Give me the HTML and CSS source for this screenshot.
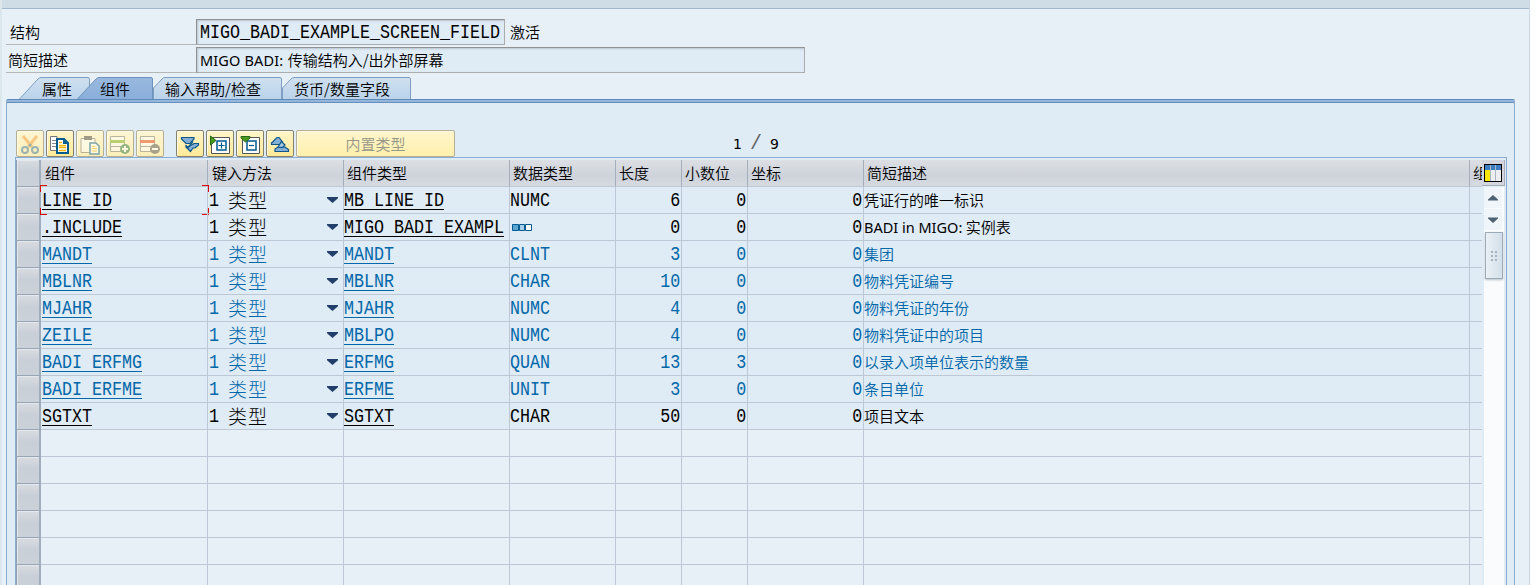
FILE: index.html
```html
<!DOCTYPE html>
<html lang="zh-CN">
<head>
  <meta charset="UTF-8">
  <title>MIGO_BADI_EXAMPLE_SCREEN_FIELD</title>
  <link rel="stylesheet" href="styles.css">
</head>
<body>
  <div class="window">
    <div class="top-bar"></div>

    <div class="form">
      <div class="form-row">
        <label class="form-label">结构</label>
        <div class="field field-name"><span class="mono">MIGO_BADI_EXAMPLE_SCREEN_FIELD</span></div>
        <span class="status">激活</span>
      </div>
      <div class="form-row">
        <label class="form-label second">简短描述</label>
        <div class="field field-desc"><span class="latin">MIGO BADI:</span>&nbsp;传输结构入/出外部屏幕</div>
      </div>
    </div>

    <div class="tabs">
      <svg class="tab-shapes" width="420" height="24" viewBox="0 0 420 24">
        <defs>
          <linearGradient id="tab" x1="0" y1="0" x2="0" y2="1">
            <stop offset="0" stop-color="#cfe0ef"/>
            <stop offset="1" stop-color="#b9d2ea"/>
          </linearGradient>
          <linearGradient id="tabActive" x1="0" y1="0" x2="0" y2="1">
            <stop offset="0" stop-color="#98b8de"/>
            <stop offset="1" stop-color="#8aaedb"/>
          </linearGradient>
        </defs>
        <g stroke="#7f9fc2">
          <path fill="url(#tab)" d="M18.5 23 L38 2 Q39.500 .5 41 .5 H88 Q89.500 .5 89.500 2 V23"/>
          <path fill="url(#tab)" d="M282.500 23 V11 L291 2 Q292.500 .5 294 .5 H409 Q410.500 .5 410.500 2 V23"/>
          <path fill="url(#tab)" d="M153.500 23 V11 L162 2 Q163.500 .5 165 .5 H280 Q281.500 .5 281.500 2 V23"/>
          <path fill="url(#tabActive)" stroke="#6d92bd" d="M76.500 23 L96 2 Q97.500 .5 99 .5 H151 Q152.500 .5 152.500 2 V23"/>
        </g>
      </svg>
      <span class="tab tab-attr">属性</span>
      <span class="tab tab-comp">组件</span>
      <span class="tab tab-help">输入帮助/检查</span>
      <span class="tab tab-curr">货币/数量字段</span>
    </div>

    <div class="panel">
      <div class="toolbar">
        <button class="btn disabled">
          <svg width="20" height="20" viewBox="0 0 20 20"><path d="M3 1 L12 12 M17 1 L8 12" stroke="#f0a040" stroke-width="3"/><g fill="none" stroke="#3a78a8" stroke-width="2"><circle cx="5" cy="15" r="3"/><circle cx="15" cy="15" r="3"/></g><circle cx="10" cy="10" r="1.500" fill="#3a78a8"/></svg>
        </button>
        <button class="btn">
          <svg width="20" height="20" viewBox="0 0 20 20"><path d="M.5 1.500H7V15.500H.5Z" fill="#fff" stroke="#777"/><path d="M2 5.500H6M2 8.500H6M2 11.500H6" stroke="#888"/><path d="M7 4 H14 L18 8 V18 H7Z" fill="#fff" stroke="#005b8e" stroke-width="2"/><path d="M13 4V9H18Z" fill="#005b8e"/><path d="M9 7.500H12M9 10.500H16M9 12.500H16M9 15.500H16" stroke="#f3b400" stroke-width="1.500"/></svg>
        </button>
        <button class="btn disabled">
          <svg width="20" height="20" viewBox="0 0 20 20"><path d="M1 3.500H15V17.500H1Z" fill="#fff" stroke="#777"/><path d="M4 1H12V5H4Z" fill="#444"/><path d="M10 8H16L19 11V19H10Z" fill="#fff" stroke="#005b8e" stroke-width="1.500"/><path d="M12 11.500H15M12 13.500H17M12 16H17" stroke="#f3b400"/></svg>
        </button>
        <button class="btn disabled">
          <svg width="20" height="20" viewBox="0 0 20 20"><path d="M.5 1.500H14.500V16.500H.5Z" fill="#fff" stroke="#777"/><path d="M0 6.500H15" stroke="#7aab20" stroke-width="3"/><path d="M0 11.500H15" stroke="#777"/><circle cx="15" cy="14" r="5" fill="#2f7d46"/><path d="M12 14H18M15 11V17" stroke="#fff" stroke-width="2"/></svg>
        </button>
        <button class="btn disabled">
          <svg width="20" height="20" viewBox="0 0 20 20"><path d="M.5 1.500H14.500V16.500H.5Z" fill="#fff" stroke="#777"/><path d="M0 6.500H15" stroke="#e0451a" stroke-width="3"/><path d="M0 11.500H15" stroke="#777"/><circle cx="15" cy="14" r="5" fill="#555"/><path d="M12 14H18" stroke="#fff" stroke-width="2"/></svg>
        </button>
        <button class="btn group">
          <svg width="20" height="20" viewBox="0 0 20 20"><path d="M1.500 2.500H14V4L10 8.500H6L1.500 4Z" fill="#83afd7" stroke="#0d5687" stroke-width="1.200"/><path d="M8 12L14 8.500H18.500V10L15 13H13L10.500 16.500L6 12Z" fill="#83afd7" stroke="#0d5687" stroke-width="1.200"/><path d="M5.500 10L8 12.500L13 6.500" fill="none" stroke="#0d5687" stroke-width="1.200"/></svg>
        </button>
        <button class="btn">
          <svg width="20" height="20" viewBox="0 0 20 20"><path d="M1.500 2.500H19.500V18.500H1.500Z" fill="#fff" stroke="#555"/><path d="M7 6H16V15H7Z" fill="#fff" stroke="#005b8e" stroke-width="1.500"/><path d="M8.500 10.500H14.500M11.500 7.500V13.500" stroke="#005b8e" stroke-width="1.200"/><path d="M.5 1L6 5.500L.5 10Z" fill="#4b981f" stroke="#286b14"/></svg>
        </button>
        <button class="btn">
          <svg width="20" height="20" viewBox="0 0 20 20"><path d="M2.500 2.500H19.500V18.500H2.500Z" fill="#fff" stroke="#555"/><path d="M7 6H16V15H7Z" fill="#fff" stroke="#005b8e" stroke-width="1.500"/><path d="M9 10.500H14" stroke="#005b8e" stroke-width="1.200"/><path d="M1 1.500H10V3L5.500 7L1 3Z" fill="#4b981f" stroke="#286b14"/></svg>
        </button>
        <button class="btn">
          <svg width="20" height="20" viewBox="0 0 20 20"><path d="M1.500 9.500V8L7 2.500H9L12.500 7L10 9.500Z" fill="#83afd7" stroke="#0d5687" stroke-width="1.200"/><path d="M5 16.500V14L8 12H15L18.500 14.500V16.500Z" fill="#83afd7" stroke="#0d5687" stroke-width="1.200"/><path d="M8 12L11.500 6.500L15 10L12.500 12.500Z" fill="#a8c7e3" stroke="#0d5687" stroke-width="1.200"/></svg>
        </button>
        <button class="btn btn-text">内置类型</button>
        <div class="pager"><span>1</span><span class="slash">/</span><span>9</span></div>
      </div>

      <div class="table">
        <div class="grid" id="grid">
          <div class="row head">
            <div class="sel"></div>
            <div>组件</div>
            <div>键入方法</div>
            <div>组件类型</div>
            <div>数据类型</div>
            <div>长度</div>
            <div>小数位</div>
            <div>坐标</div>
            <div>简短描述</div>
            <div>组</div>
          </div>
        </div>
        <div class="side">
          <div class="config">
            <svg width="18" height="18" viewBox="0 0 18 18"><path d="M0 0H18V18H0Z"/><path d="M1 1H17V6H1Z" fill="#3d7fc0"/><path d="M1 6H6V17H1Z" fill="#ffe600"/><path d="M7 6H11V17H7ZM12 6H17V17H12Z" fill="#eceef2"/><path d="M6.500 1V17M11.500 1V17" stroke="#a9b6c4"/></svg>
          </div>
          <div class="scroll">
            <div class="scroll-btn"><svg width="12" height="6"><path d="M1 5.500V4.500L6 0L11 4.500V5.500Z" fill="#4e6272"/></svg></div>
            <div class="scroll-btn"><svg width="12" height="6"><path d="M1 .5V1.500L6 6L11 1.500V.5Z" fill="#4e6272"/></svg></div>
            <div class="thumb"><svg width="8" height="10"><path d="M1 1H3M5 1H7M1 5H3M5 5H7M1 9H3M5 9H7" stroke="#a5b3c0" stroke-width="2"/></svg></div>
          </div>
        </div>
      </div>
    </div>
  </div>

  <script>
    const rows = [
      ["LINE_ID", "MB_LINE_ID", "NUMC", 6, 0, "凭证行的唯一标识"],
      [".INCLUDE", "MIGO_BADI_EXAMPL", null, 0, 0, "<span class=\"latin\">BADI in MIGO:</span>&nbsp;实例表"],
      ["MANDT", "MANDT", "CLNT", 3, 0, "集团", "blue"],
      ["MBLNR", "MBLNR", "CHAR", 10, 0, "物料凭证编号", "blue"],
      ["MJAHR", "MJAHR", "NUMC", 4, 0, "物料凭证的年份", "blue"],
      ["ZEILE", "MBLPO", "NUMC", 4, 0, "物料凭证中的项目", "blue"],
      ["BADI_ERFMG", "ERFMG", "QUAN", 13, 3, "以录入项单位表示的数量", "blue"],
      ["BADI_ERFME", "ERFME", "UNIT", 3, 0, "条目单位", "blue"],
      ["SGTXT", "SGTXT", "CHAR", 50, 0, "项目文本"]
    ];
    const emptyRows = 6;
    const structIcon = '<svg class="struct" width="20" height="7"><path d="M.5 .5H6.500V6.500H.5Z" fill="#5aa5d2" stroke="#005b8e"/><path d="M7.500 .5H12.500V6.500H7.500Z" fill="#a9d0e8" stroke="#005b8e"/><path d="M13.500 .5H19.500V6.500H13.500Z" fill="#fff" stroke="#005b8e"/></svg>';
    const corners = '<i class="corner tl"></i><i class="corner tr"></i><i class="corner bl"></i><i class="corner br"></i>';

    function mono(text) {
      return `<span class="mono">${text}</span>`;
    }

    // the wrapper's underline also stands for the underscores
    function link(text) {
      const label = text.replace(/_/g, '<span class="under">_</span>');
      return `<span class="link" style="width:${text.length * 10}px">${mono(label)}</span>`;
    }

    function addRow(className, cells) {
      const row = document.createElement("div");
      row.className = "row " + className;
      row.innerHTML = cells.join("");
      document.getElementById("grid").appendChild(row);
    }

    rows.forEach((r, i) => {
      addRow(r[6] || "", [
        '<div class="sel"></div>',
        `<div class="cell first">${link(r[0])}${i === 0 ? corners : ""}</div>`,
        `<div class="cell method">${mono("1")}<span class="kind">类型</span><i class="arrow"></i></div>`,
        `<div class="cell">${link(r[1])}</div>`,
        `<div class="cell">${r[2] ? mono(r[2]) : structIcon}</div>`,
        `<div class="cell num">${mono(r[3])}</div>`,
        `<div class="cell num">${mono(r[4])}</div>`,
        `<div class="cell num">${mono("0")}</div>`,
        `<div class="cell desc">${r[5]}</div>`,
        '<div class="cell"></div>'
      ]);
    });

    for (let i = 0; i < emptyRows; i++) {
      addRow("empty", ['<div class="sel"></div>'].concat(Array(9).fill('<div class="cell"></div>')));
    }
  </script>
</body>
</html>
```
FILE: styles.css
```css
* {
  box-sizing: border-box;
}

body {
  margin: 0;
  height: 585px;
  overflow: hidden;
  background: #fdfefe;
  color: #000;
  font-family: "Noto Sans CJK SC", sans-serif;
  font-size: 15px;
  font-weight: 350;
  line-height: 20px;
  white-space: nowrap;
}

.window {
  width: 1530px;
  height: 585px;
  overflow: hidden;
  background: #e8f0f7;
  border-left: 2px solid #dce6ed;
  border-right: 1px solid #cdd6e3;
}

.top-bar {
  height: 9px;
  background: #cfdde7;
  border-bottom: 1px solid #a2b8cf;
}

.latin {
  font-family: "Noto Sans", sans-serif;
  font-size: 14.5px;
  font-weight: 400;
}

.mono {
  display: inline-block;
  font-family: "Liberation Mono", monospace;
  font-size: 20px;
  font-weight: 400;
  line-height: 26px;
  transform: scaleX(0.8333);
  transform-origin: left center;
}

/* form */
.form {
  padding: 10px 0 0 4px;
}

.form-row {
  display: flex;
  height: 26px;
  margin-bottom: 2px;
}

.form-label {
  width: 190px;
  padding: 3px 0 0 4px;
  border-bottom: 1px solid #b4b6b8;
}

.form-label.second {
  padding-left: 2px;
}

.field {
  height: 26px;
  padding: 2px 0 0 3px;
  background: #dfebf5;
  border: 1px solid #acacac;
  border-top-color: #919191;
  border-left-color: #919191;
  box-shadow: inset 1px 1px 2px #b9c5ce;
}

.field-name {
  width: 309px;
  padding-top: 0;
}

.field-desc {
  width: 609px;
}

.field-desc .latin {
  margin-right: 1px;
  letter-spacing: 0.15px;
}

.status {
  padding: 3px 0 0 5px;
}

/* tabs */
.tabs {
  position: relative;
  display: flex;
  height: 24px;
  margin-top: 4px;
}

.tab-shapes {
  position: absolute;
  left: -2px;
  top: 0;
}

.tab {
  position: relative;
  padding-top: 2px;
}

.tab-attr {
  width: 58px;
  margin-left: 40px;
}

.tab-comp {
  width: 65px;
}

.tab-help {
  width: 129px;
}

/* panel */
.panel {
  position: relative;
  width: 1509px;
  height: 500px;
  margin: -2px 0 0 4px;
  padding: 30px 0 0 8px;
  background: #dfebf5;
  border: 1px solid #8aaccf;
  border-top-color: #5f8bb6;
  border-radius: 2px 2px 0 0;
  box-shadow: inset 0 2px 0 #95b6dc, inset 0 3px 0 #6590bb;
}

.toolbar {
  display: flex;
  gap: 2px;
  height: 27px;
  padding-left: 1px;
}

.btn {
  width: 28px;
  height: 27px;
  padding: 2px 0 0 3px;
  background: linear-gradient(#fff5c9, #ffe998);
  border: 1px solid #85806c;
  border-radius: 2px;
  box-shadow: inset 1px 1px 0 #fffbe6;
  text-align: left;
}

.btn svg {
  display: block;
}

.btn.disabled {
  background: linear-gradient(#fdf6d3, #fceeb7);
  border-color: #b5ae93;
}

.btn.disabled svg {
  opacity: 0.5;
}

.btn.group {
  margin-left: 10px;
}

.btn-text {
  width: 159px;
  padding: 0;
  background: linear-gradient(#fef5cc, #fff0ad);
  border-color: #b5ae93;
  color: #979787;
  font-family: "Noto Sans CJK SC", sans-serif;
  font-size: 15px;
  font-weight: 350;
  text-align: center;
}

.pager {
  display: flex;
  padding: 4px 0 0 276px;
  font-family: "DejaVu Sans", sans-serif;
  font-size: 14px;
  font-weight: 400;
}

.slash {
  width: 28px;
  font-family: "Liberation Mono", monospace;
  font-size: 20px;
  text-align: center;
  color: #666;
}

/* table */
.table {
  display: flex;
  width: 1492px;
  height: 450px;
  padding-top: 2px;
  border: 1px solid #8aaccf;
}

.grid {
  width: 1466px;
  overflow: hidden;
}

.row {
  display: grid;
  grid-template-columns: 25px 167px 136px 166px 106px 66px 66px 116px 606px 12px;
  grid-template-rows: 27px;
  height: 27px;
}

.row > div {
  border-right: 1px solid #bec7d5;
  border-bottom: 1px solid #bec7d5;
}

.row > div:last-child {
  border-right: 0;
  overflow: hidden;
}

.head > div {
  padding: 3px 0 0 4px;
  border-right-color: #a6aebb;
  background: linear-gradient(#dce0e4, #ced2da 60%, #d6dae1);
}

.head > div:nth-child(n + 4) {
  padding-left: 3px;
}

.row > .sel {
  background: linear-gradient(#d8dce2, #c9cfd7 45%, #cbd1d9);
  border-left: 1px solid #909fb2;
  border-right: 2px solid #a1adbb;
  border-bottom-color: #98a5b5;
  box-shadow: inset 1px 1px 0 #e4e7eb;
}

.cell {
  position: relative;
  display: flex;
}

.cell.first {
  padding-left: 1px;
}

.cell .mono {
  line-height: 27px;
}

.empty .cell {
  background: #e8f0f7;
}

.link {
  height: 23px;
  border-bottom: 1px solid currentColor;
}

.under {
  color: transparent;
}

.method {
  padding-left: 1px;
}

.kind {
  font-size: 19px;
  font-weight: 300;
  line-height: 25px;
  letter-spacing: 1px;
  margin-left: 7px;
}

.arrow {
  width: 11px;
  height: 6px;
  margin: 10px 5px 0 auto;
  background: #223f6b;
  clip-path: polygon(0 0, 100% 0, 100% 20%, 50% 100%, 0 20%);
}

.num {
  justify-content: flex-end;
}

.num .mono {
  transform-origin: right center;
  padding-right: 1px;
}

.row > .desc {
  padding: 3px 0 0 0;
}

.struct {
  margin: 10px 0 0 2px;
}

.blue {
  color: #0067a8;
}

/* cursor frame around the selected cell */
.corner {
  position: absolute;
  width: 7px;
  height: 7px;
  border: 0 solid #e00000;
}

.tl {
  left: -1px;
  top: -2px;
  border-width: 1px 0 0 1px;
}

.tr {
  right: -2px;
  top: -2px;
  border-width: 1px 1px 0 0;
}

.bl {
  left: -1px;
  bottom: -2px;
  border-width: 0 0 1px 1px;
}

.br {
  right: -2px;
  bottom: -2px;
  border-width: 0 1px 1px 0;
}

/* right side */
.config {
  width: 23px;
  height: 26px;
  padding: 4px 0 0 2px;
  background: #d3d7dd;
  border-right: 1px solid #a6aebb;
  border-bottom: 1px solid #a6aebb;
}

.scroll {
  width: 20px;
  height: 420px;
  margin: 1px 0 0 2px;
  background: #f9fbfc;
}

.scroll-btn {
  display: flex;
  align-items: center;
  justify-content: center;
  width: 18px;
  height: 22px;
  background: #f0f5f9;
  border-bottom: 1px solid #f9fbfc;
}

.thumb {
  display: flex;
  align-items: center;
  justify-content: center;
  width: 18px;
  height: 47px;
  margin: 1px 0 0 1px;
  background: linear-gradient(90deg, #eaf1f6, #d3dfe9);
  border: 1px solid #9babb9;
  box-shadow: 0 1px 2px #b5bec6;
}
```
